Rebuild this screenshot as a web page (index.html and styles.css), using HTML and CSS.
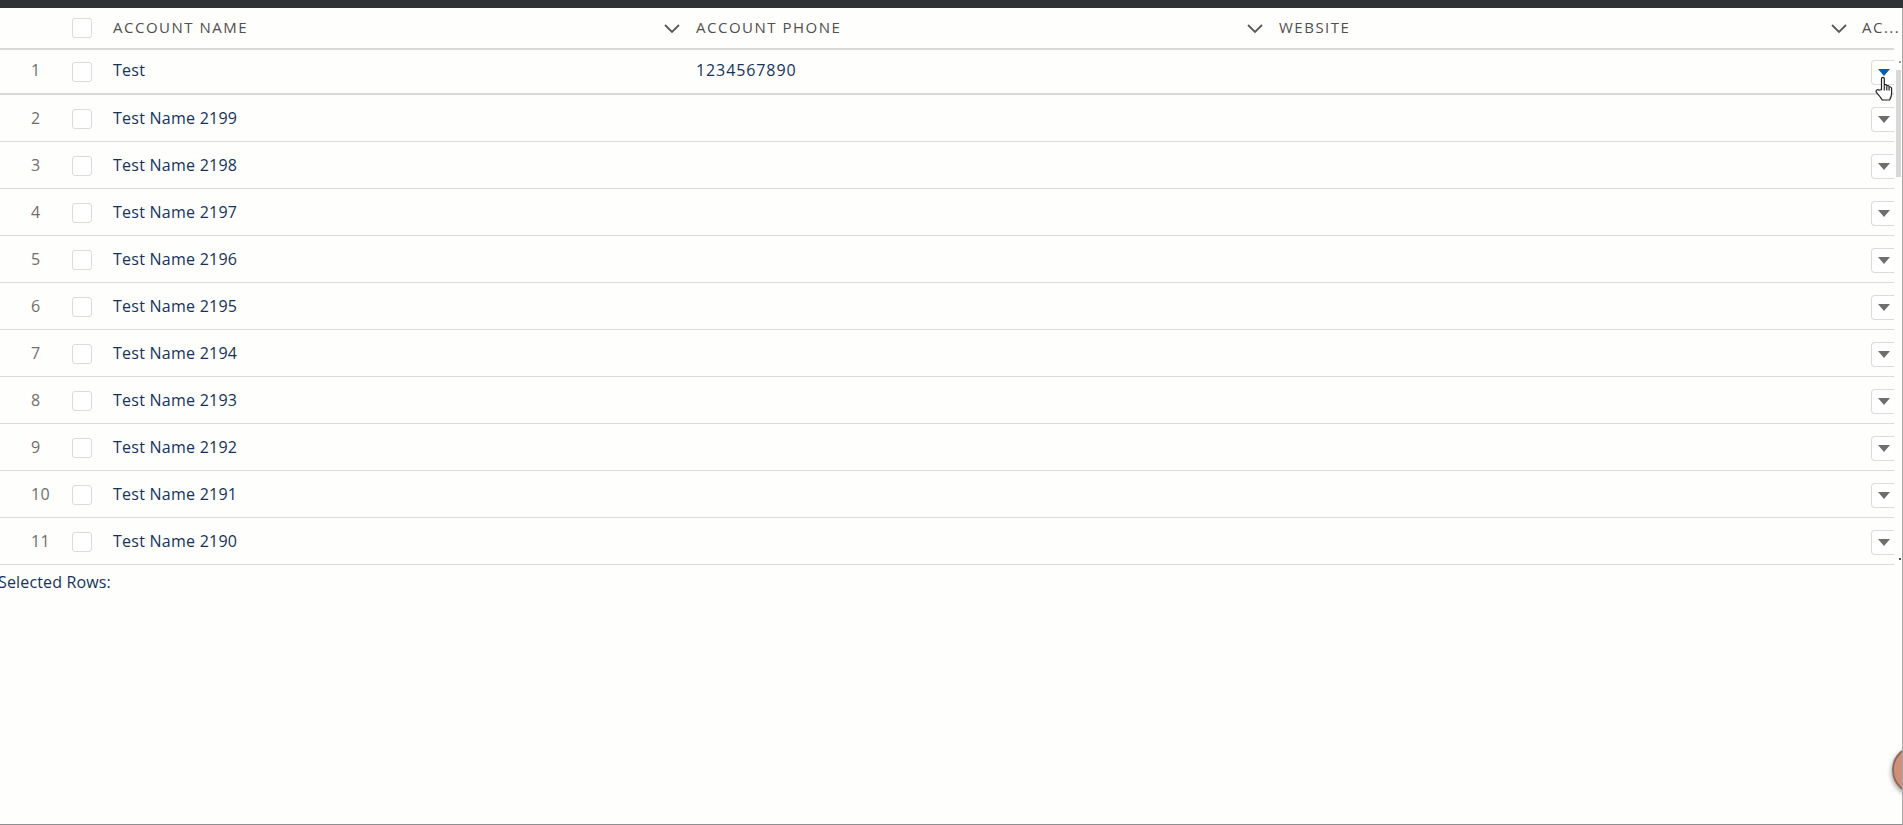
FILE: index.html
```html
<!DOCTYPE html>
<html lang="en">
<head>
<meta charset="UTF-8">
<meta name="viewport" content="width=device-width, initial-scale=1.0">
<title>Accounts</title>
<link rel="stylesheet" href="styles.css">
</head>
<body>
    <div class="top-bar"></div>

    <div class="page">
        <!-- Table -->
        <div class="table">
            <div class="row head">
                <div class="cell"></div>
                <div class="cell"><span class="check"></span></div>
                <div class="cell label"><span>ACCOUNT NAME</span><svg class="chev" viewBox="0 0 16 9"><path d="M1 1l7 7 7-7"/></svg></div>
                <div class="cell label"><span>ACCOUNT PHONE</span><svg class="chev" viewBox="0 0 16 9"><path d="M1 1l7 7 7-7"/></svg></div>
                <div class="cell label"><span>WEBSITE</span><svg class="chev" viewBox="0 0 16 9"><path d="M1 1l7 7 7-7"/></svg></div>
                <div class="cell label last"><span>AC...</span></div>
            </div>

            <div class="row first">
                <div class="cell num">1</div>
                <div class="cell"><span class="check"></span></div>
                <div class="cell name">Test</div>
                <div class="cell name phone">1234567890</div>
                <div class="cell"></div>
                <div class="cell"><span class="action active"><i></i></span></div>
            </div>
            <div class="row">
                <div class="cell num">2</div>
                <div class="cell"><span class="check"></span></div>
                <div class="cell name">Test Name 2199</div>
                <div class="cell"></div>
                <div class="cell"></div>
                <div class="cell"><span class="action"><i></i></span></div>
            </div>
            <div class="row">
                <div class="cell num">3</div>
                <div class="cell"><span class="check"></span></div>
                <div class="cell name">Test Name 2198</div>
                <div class="cell"></div>
                <div class="cell"></div>
                <div class="cell"><span class="action"><i></i></span></div>
            </div>
            <div class="row">
                <div class="cell num">4</div>
                <div class="cell"><span class="check"></span></div>
                <div class="cell name">Test Name 2197</div>
                <div class="cell"></div>
                <div class="cell"></div>
                <div class="cell"><span class="action"><i></i></span></div>
            </div>
            <div class="row">
                <div class="cell num">5</div>
                <div class="cell"><span class="check"></span></div>
                <div class="cell name">Test Name 2196</div>
                <div class="cell"></div>
                <div class="cell"></div>
                <div class="cell"><span class="action"><i></i></span></div>
            </div>
            <div class="row">
                <div class="cell num">6</div>
                <div class="cell"><span class="check"></span></div>
                <div class="cell name">Test Name 2195</div>
                <div class="cell"></div>
                <div class="cell"></div>
                <div class="cell"><span class="action"><i></i></span></div>
            </div>
            <div class="row">
                <div class="cell num">7</div>
                <div class="cell"><span class="check"></span></div>
                <div class="cell name">Test Name 2194</div>
                <div class="cell"></div>
                <div class="cell"></div>
                <div class="cell"><span class="action"><i></i></span></div>
            </div>
            <div class="row">
                <div class="cell num">8</div>
                <div class="cell"><span class="check"></span></div>
                <div class="cell name">Test Name 2193</div>
                <div class="cell"></div>
                <div class="cell"></div>
                <div class="cell"><span class="action"><i></i></span></div>
            </div>
            <div class="row">
                <div class="cell num">9</div>
                <div class="cell"><span class="check"></span></div>
                <div class="cell name">Test Name 2192</div>
                <div class="cell"></div>
                <div class="cell"></div>
                <div class="cell"><span class="action"><i></i></span></div>
            </div>
            <div class="row">
                <div class="cell num">10</div>
                <div class="cell"><span class="check"></span></div>
                <div class="cell name">Test Name 2191</div>
                <div class="cell"></div>
                <div class="cell"></div>
                <div class="cell"><span class="action"><i></i></span></div>
            </div>
            <div class="row">
                <div class="cell num">11</div>
                <div class="cell"><span class="check"></span></div>
                <div class="cell name">Test Name 2190</div>
                <div class="cell"></div>
                <div class="cell"></div>
                <div class="cell"><span class="action"><i></i></span></div>
            </div>
        </div>

        <div class="selected">Selected Rows:</div>

        <!-- Overlays -->
        <div class="scroll-thumb"></div>
        <div class="tick tick-up"></div>
        <div class="tick tick-down"></div>
        <div class="avatar"></div>
        <svg class="cursor" viewBox="0 0 18 25">
            <path d="M6.5 13.5V3C6.5 0.8 9.3 0.8 9.3 3V9.6C9.5 8.3 11.7 8.3 11.8 9.8V10.4C12.1 9.2 14 9.3 14.1 10.8V11.6C14.5 10.6 16.6 10.8 16.6 12.4V17.5C16.6 20 15.8 21.8 14.6 24H7.2C6.2 21.8 4.2 19.6 1.4 16.4C0.2 14.7 2.4 12.8 4.2 14.2Z"/>
            <path d="M9.3 9.6V14.5M11.8 10.4V14.5M14.1 11.6V14.5"/>
        </svg>
    </div>
</body>
</html>
```

FILE: styles.css
```css
/* General Reset */
* {
    margin: 0;
    padding: 0;
    box-sizing: border-box;
}

body {
    height: 100vh;
    width: 100%;
    font-family: "Open Sans", Lato, sans-serif;
    font-size: 16px;
    letter-spacing: 0.25px;
    color: #16325c;
    background-color: #fefefc;
    overflow: hidden;
}

.top-bar {
    height: 8px;
    background-color: #2f3336;
}

.page {
    position: relative;
    height: 817px;
    border-right: 1px solid #a9a9a9;
    border-bottom: 1px solid #8f8f8f;
    overflow: hidden;
}

/* Table */
.table {
    width: 1894px;
}

.row {
    display: grid;
    grid-template-columns: 72px 41px 583px 583px 584px 31px;
    height: 47px;
    align-items: center;
    border-bottom: 1px solid #dddbda;
}

.row.head {
    height: 42px;
    border-bottom: 2px solid #d9d8da;
    color: #514f4d;
    font-size: 15px;
    letter-spacing: 1.5px;
}

.row.first {
    height: 45px;
    border-bottom: 2px solid #d9d8da;
}

.cell {
    white-space: nowrap;
}

.cell.name,
.cell.num {
    margin-top: -1px;
}

.row.first .cell.name,
.row.first .cell.num {
    margin-top: -3px;
}

.cell.phone {
    letter-spacing: 0.9px;
}

.cell.num {
    padding-left: 31px;
    color: #706e6b;
}

.cell.label {
    display: flex;
    align-items: center;
    justify-content: space-between;
    padding-right: 16px;
}

.cell.label span {
    margin-top: -2px;
}

.cell.label.last {
    margin-left: -1px;
}

.chev {
    width: 16px;
    height: 9px;
    fill: none;
    stroke: #5a5a5a;
    stroke-width: 1.8;
}

.check {
    display: block;
    width: 20px;
    height: 20px;
    background-color: #fff;
    border: 1px solid #dddbda;
    border-radius: 3px;
}

.row:not(.head):not(.first) .check {
    margin-top: 2px;
}

/* Row action button, its right side is cut off by the table edge */
.action {
    display: flex;
    align-items: center;
    justify-content: center;
    width: 23px;
    height: 25px;
    margin: 2px 0 0 8px;
    padding-left: 1px;
    background-color: #fff;
    border: 1px solid #dddbda;
    border-right: none;
    border-radius: 4px 0 0 4px;
}

.action i {
    width: 0;
    height: 0;
    border-left: 6px solid transparent;
    border-right: 6px solid transparent;
    border-top: 7px solid #706e6b;
}

.action.active i {
    border-top-color: #0b5cab;
}

.selected {
    margin: 7px 0 0 -2px;
    line-height: 20px;
    letter-spacing: 0.15px;
}

/* Overlays */
.scroll-thumb {
    position: absolute;
    top: 62px;
    right: 1px;
    width: 5px;
    height: 107px;
    background-color: #d8d8d8;
}

.tick {
    position: absolute;
    left: 1899px;
    width: 2px;
    height: 2px;
    background-color: #999;
}

.tick-up {
    top: 53px;
}

.tick-down {
    top: 550px;
    background-color: #555;
}

.avatar {
    position: absolute;
    top: 737px;
    left: 1892px;
    width: 50px;
    height: 50px;
    border-radius: 50%;
    background: radial-gradient(circle at 25px 25px, #ead9cf 0 15px, #cf8f79 17px);
    border: 2px solid #8c6a5e;
    box-shadow: -1px 2px 4px #aaa;
}

.cursor {
    position: absolute;
    top: 68px;
    left: 1875px;
    width: 18px;
    height: 25px;
    fill: #fff;
    stroke: #222;
    stroke-width: 1.2;
}
```
